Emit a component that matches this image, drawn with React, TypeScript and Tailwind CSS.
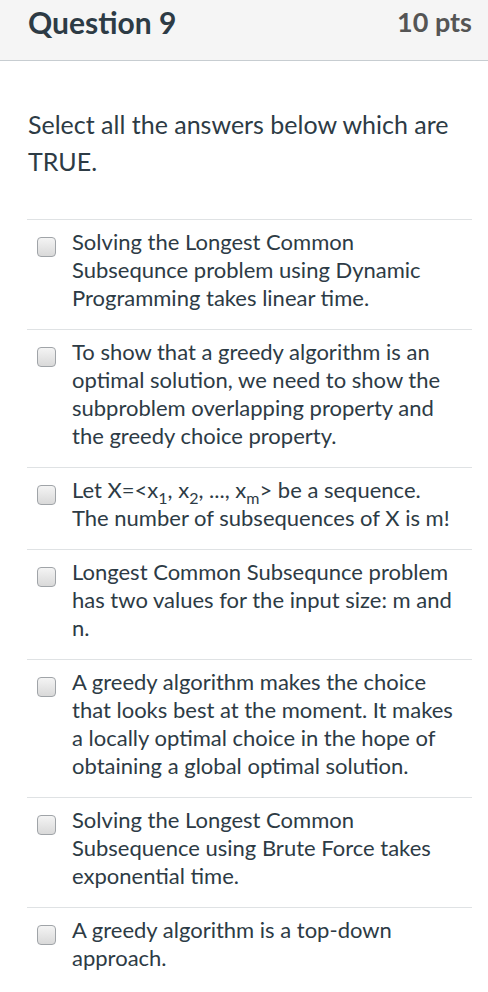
const sub = "relative top-[6px] text-[16px] leading-none";

const answers: React.ReactNode[] = [
  "Solving the Longest Common Subsequnce problem using Dynamic Programming takes linear time.",
  "To show that a greedy algorithm is an optimal solution, we need to show the subproblem overlapping property and the greedy choice property.",
  <>
    Let X=&lt;x<span className={sub}>1</span>, x<span className={sub}>2</span>, ..., x
    <span className={sub}>m</span>&gt; be a sequence. The number of subsequences of X is m!
  </>,
  "Longest Common Subsequnce problem has two values for the input size: m and n.",
  "A greedy algorithm makes the choice that looks best at the moment. It makes a locally optimal choice in the hope of obtaining a global optimal solution.",
  "Solving the Longest Common Subsequence using Brute Force takes exponential time.",
  "A greedy algorithm is a top-down approach.",
];

const App = () => {
  return (
    <div className="min-h-[992px] w-[488px] bg-white font-['Lato','Liberation_Sans',sans-serif] text-[#2d3b45]">
      <div className="flex h-[61px] items-center justify-between border-b border-[#c7cdd1] bg-[#f5f5f5] pl-[28px] pr-[16px] pb-[16px]">
        <h2 className="text-[30px] font-bold">Question 9</h2>
        <span className="text-[27px] font-bold text-[#555]">10 pts</span>
      </div>
      <div className="pl-[27px] pr-[16px]">
        <p className="mt-[45px] pl-px text-[25px] leading-[37px]">
          Select all the answers below which are TRUE.
        </p>
        <div className="mt-[39px]">
          {answers.map((a, i) => (
            <div
              key={i}
              className="flex border-t border-[#dfe2e4] pt-[8px] pb-[17px]"
            >
              <div className="w-[45px] shrink-0 pl-[10px] pt-[9px]">
                <div className="h-[20px] w-[19px] rounded-[4px] border border-[#a0a4a8] bg-gradient-to-b from-[#f4f4f4] to-[#d9d9d9]" />
              </div>
              <div className="pr-[19px] text-[22px] leading-[28px]">{a}</div>
            </div>
          ))}
        </div>
      </div>
    </div>
  );
};

export default App;
